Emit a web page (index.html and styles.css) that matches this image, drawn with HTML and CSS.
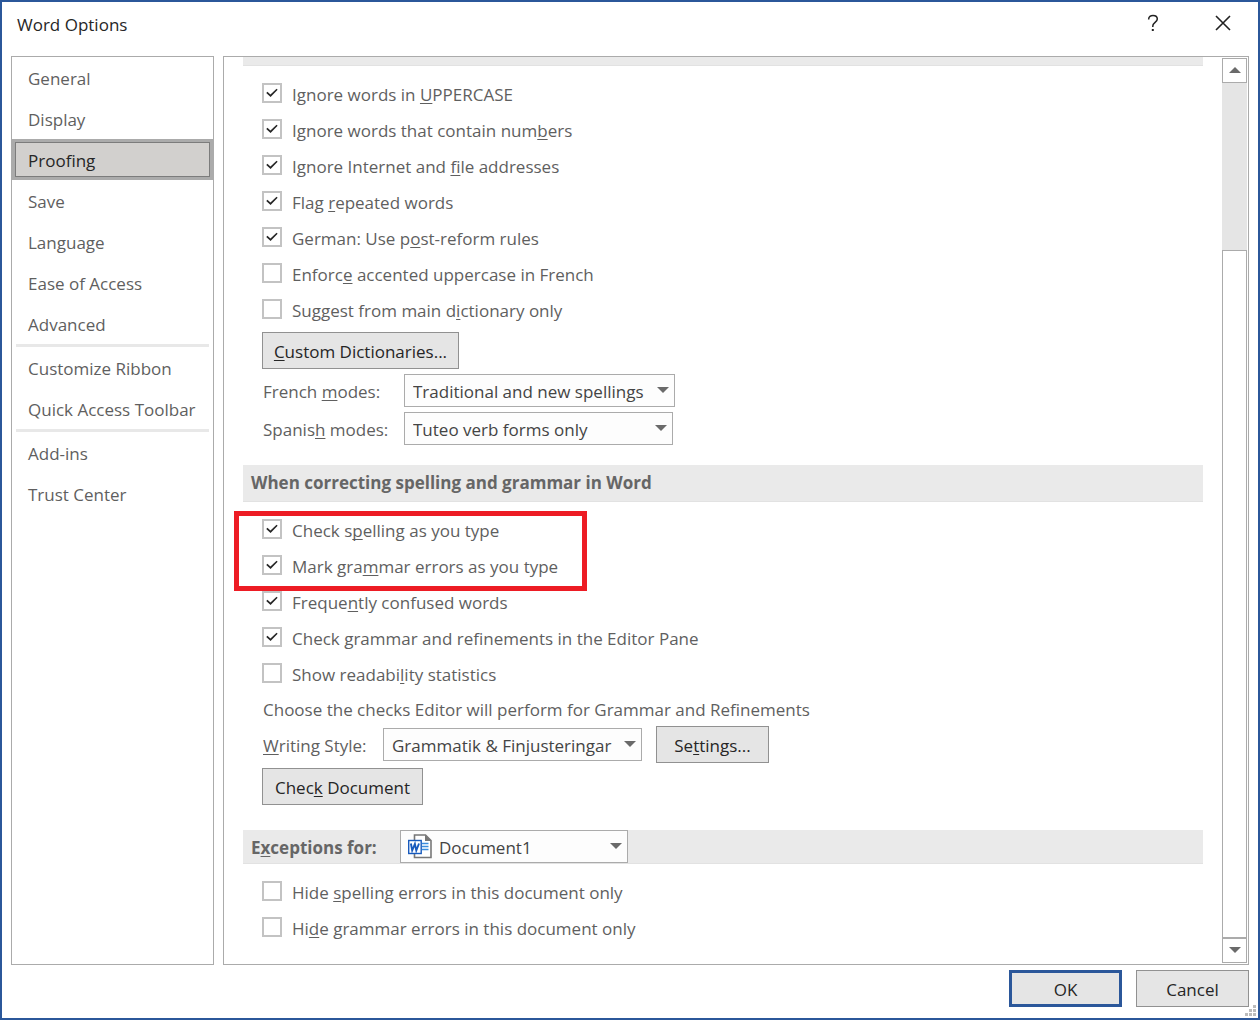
FILE: index.html
```html
<!DOCTYPE html>
<html lang="en">
<head>
<meta charset="utf-8">
<meta name="viewport" content="width=device-width, initial-scale=1">
<title>Word Options</title>
<link rel="stylesheet" href="styles.css">
</head>
<body>
<div class="dialog" role="dialog" aria-labelledby="dialog-title">
  <header class="titlebar">
    <h1 class="title" id="dialog-title">Word Options</h1>
    <button class="caption-btn" type="button" aria-label="Help">
      <svg width="16" height="18" viewBox="0 0 16 18" fill="none" stroke="#222" stroke-width="1.5"><path d="M3.700 5.600V5C3.700 2.700 5.600 1.500 8 1.500S12.300 2.800 12.300 5C12.300 8.200 7.800 8.600 7.800 12V13"/><path d="M7.800 15V17" stroke-width="2"/></svg>
    </button>
    <button class="caption-btn" type="button" aria-label="Close">
      <svg width="16" height="16" viewBox="0 0 16 16" fill="none" stroke="#222" stroke-width="1.6"><path d="M1 1L15 15M15 1L1 15"/></svg>
    </button>
  </header>

  <div class="main">
    <nav class="sidebar" aria-label="Categories">
      <a class="nav-item" href="#general">General</a>
      <a class="nav-item" href="#display">Display</a>
      <a class="nav-item selected" href="#proofing" aria-current="page">Proofing</a>
      <a class="nav-item" href="#save">Save</a>
      <a class="nav-item" href="#language">Language</a>
      <a class="nav-item" href="#ease">Ease of Access</a>
      <a class="nav-item" href="#advanced">Advanced</a>
      <hr class="nav-rule">
      <a class="nav-item" href="#ribbon">Customize Ribbon</a>
      <a class="nav-item" href="#toolbar">Quick Access Toolbar</a>
      <hr class="nav-rule">
      <a class="nav-item" href="#addins">Add-ins</a>
      <a class="nav-item" href="#trust">Trust Center</a>
    </nav>

    <div class="panel">
      <form class="options" id="proofing">
        <div class="section-edge"></div>
        <div class="group">
          <label class="check"><input type="checkbox" checked><span>Ignore words in <u>U</u>PPERCASE</span></label>
          <label class="check"><input type="checkbox" checked><span>Ignore words that contain num<u>b</u>ers</span></label>
          <label class="check"><input type="checkbox" checked><span>Ignore Internet and <u>f</u>ile addresses</span></label>
          <label class="check"><input type="checkbox" checked><span>Flag <u>r</u>epeated words</span></label>
          <label class="check"><input type="checkbox" checked><span>German: Use p<u>o</u>st-reform rules</span></label>
          <label class="check"><input type="checkbox"><span>Enforc<u>e</u> accented uppercase in French</span></label>
          <label class="check"><input type="checkbox"><span>Suggest from main d<u>i</u>ctionary only</span></label>
          <div class="stack">
            <button class="btn btn-dictionaries" type="button"><u>C</u>ustom Dictionaries...</button>
            <div class="field">
              <label class="field-label modes" for="french">French <u>m</u>odes:</label>
              <span class="combo combo-french"><select id="french"><option>Traditional and new spellings</option></select></span>
            </div>
            <div class="field">
              <label class="field-label modes" for="spanish">Spanis<u>h</u> modes:</label>
              <span class="combo combo-spanish"><select id="spanish"><option>Tuteo verb forms only</option></select></span>
            </div>
          </div>
        </div>

        <h2 class="section">When correcting spelling and grammar in Word</h2>
        <div class="group">
          <div class="highlight">
            <label class="check"><input type="checkbox" checked><span>Check s<u>p</u>elling as you type</span></label>
            <label class="check"><input type="checkbox" checked><span>Mark gra<u>m</u>mar errors as you type</span></label>
          </div>
          <label class="check"><input type="checkbox" checked><span>Freque<u>n</u>tly confused words</span></label>
          <label class="check"><input type="checkbox" checked><span>Check grammar and refinements in the Editor Pane</span></label>
          <label class="check"><input type="checkbox"><span>Show readabi<u>l</u>ity statistics</span></label>
          <p class="note">Choose the checks Editor will perform for Grammar and Refinements</p>
          <div class="field">
            <label class="field-label style" for="style"><u>W</u>riting Style:</label>
            <span class="combo combo-style"><select id="style"><option>Grammatik &amp; Finjusteringar</option></select></span>
            <button class="btn btn-std" type="button">Se<u>t</u>tings...</button>
          </div>
          <button class="btn btn-check" type="button">Chec<u>k</u> Document</button>
        </div>

        <div class="section section-field">
          <label class="exceptions" for="doc">E<u>x</u>ceptions for:</label>
          <span class="combo combo-doc">
            <svg class="doc-icon" width="24" height="25" viewBox="0 0 24 25" fill="none">
              <path d="M6.500 1H17.500L23 6.500V23.500H6.500Z" fill="#fff" stroke="#777" stroke-width="1.600"/>
              <path d="M17 1V7H23Z" fill="#777"/>
              <path d="M14 9.500H20.500M14 12.500H20.500M14 15.500H20.500" stroke="#3a8ddd" stroke-width="1.500"/>
              <rect x="0.700" y="6.500" width="12.500" height="13" fill="#fff" stroke="#185abd" stroke-width="1.400"/>
              <path d="M2.900 9.500L4.200 16.500L6.900 10L8.300 16.500L11 9.500" stroke="#185abd" stroke-width="1.900"/>
            </svg>
            <select id="doc"><option>Document1</option></select>
          </span>
        </div>
        <div class="group">
          <label class="check"><input type="checkbox"><span>Hide <u>s</u>pelling errors in this document only</span></label>
          <label class="check"><input type="checkbox"><span>Hi<u>d</u>e grammar errors in this document only</span></label>
        </div>
      </form>

      <div class="scrollbar">
        <button class="scroll-btn up" type="button" aria-label="Scroll up"></button>
        <div class="scroll-gap"></div>
        <div class="scroll-thumb"></div>
        <button class="scroll-btn down" type="button" aria-label="Scroll down"></button>
      </div>
    </div>
  </div>

  <footer class="footer">
    <button class="btn btn-std btn-default" type="button">OK</button>
    <button class="btn btn-std" type="button">Cancel</button>
  </footer>
  <svg class="grip" width="11" height="11" viewBox="0 0 11 11" fill="#bcbcbc" aria-hidden="true"><path d="M8 0h3v3h-3zM4 4h3v3h-3zM8 4h3v3h-3zM0 8h3v3h-3zM4 8h3v3h-3zM8 8h3v3h-3z"/></svg>
</div>
</body>
</html>
```
FILE: styles.css
```css
*, *::before, *::after { box-sizing: border-box; }

body {
  margin: 0;
  background: #fff;
  color: #5f5f5f;
  font: 17px/24px "Open Sans", "Noto Sans", sans-serif;
}

button, select, input { font: inherit; margin: 0; }

u {
  text-decoration-thickness: 1px;
  text-underline-offset: 2px;
  text-decoration-skip-ink: none;
}

.dialog {
  position: relative;
  display: flex;
  flex-direction: column;
  min-height: 100vh;
  border: 2px solid #2b579a;
}

/* Title bar */
.titlebar {
  display: flex;
  align-items: center;
  height: 54px;
  padding: 0 0 12px 15px;
}
.title {
  flex: 1;
  margin: 0;
  padding-top: 4px;
  color: #262626;
  font-size: 17px;
  font-weight: 400;
}
.caption-btn {
  display: grid;
  place-items: center;
  width: 70px;
  height: 40px;
  padding: 0;
  border: 0;
  background: none;
}

/* Two columns */
.main {
  flex: 1;
  display: grid;
  grid-template-columns: 203px 1fr;
  gap: 9px;
  padding: 0 9px;
}
.sidebar, .panel { border: 1px solid #ababab; }

.nav-item {
  display: flex;
  align-items: center;
  height: 41px;
  padding: 2px 16px 0;
  color: inherit;
  text-decoration: none;
  white-space: nowrap;
}
.nav-item.selected {
  padding: 2px 13px 0;
  border: 3px solid #ababab;
  background: #d2d0ce;
  color: #262626;
  outline: 1px solid #7c7c7c;
  outline-offset: -4px;
}
.nav-rule {
  height: 3px;
  margin: 0 4px;
  border: 0;
  background: #e8e8e8;
}

/* Options panel */
.panel { display: flex; padding: 0 1px 0 19px; }
.options { flex: 1; min-width: 0; }

.section-edge {
  height: 9px;
  background: #eaeaea;
  border-bottom: 1px solid #e2e2e2;
}
.group { padding: 9px 0 0 19px; }

.section {
  display: flex;
  align-items: center;
  height: 37px;
  margin: 20px 0 0;
  padding: 0 8px;
  border-bottom: 1px solid #e2e2e2;
  background: #eaeaea;
  color: #666;
  font-size: 17px;
  font-weight: 700;
}
.section-field { height: 34px; margin-top: 25px; }
.exceptions { width: 149px; padding-top: 2px; }

.check {
  display: flex;
  align-items: center;
  gap: 10px;
  width: max-content;
  height: 36px;
}
.check span { padding-top: 4px; }
.check input {
  appearance: none;
  display: grid;
  place-items: center;
  width: 20px;
  height: 20px;
  border: 2px solid #c3c3c3;
  background: #fff;
}
.check input:checked::before {
  content: "";
  width: 12px;
  height: 10px;
  background: #262626;
  clip-path: polygon(2% 50%, 12% 38%, 37% 66%, 88% 8%, 97% 18%, 38% 90%);
}

.highlight { position: relative; }
.highlight::after {
  content: "";
  position: absolute;
  top: 0;
  left: -28px;
  width: 353px;
  height: 80px;
  border: 5px solid #ed1c24;
  pointer-events: none;
}

.stack {
  display: flex;
  flex-direction: column;
  align-items: flex-start;
  gap: 5px;
  padding-top: 5px;
}
.field { display: flex; align-items: center; }
.field-label { padding: 2px 0 0 1px; }
.modes { width: 142px; }
.style { width: 121px; }
.note { margin: 0; padding: 7px 0 4px 1px; }

.btn {
  height: 37px;
  padding: 2px 0 0;
  border: 1px solid #919191;
  background: #e5e5e5;
  color: #262626;
}
.btn-std { width: 113px; }
.btn-dictionaries { width: 197px; }
.btn-check { width: 161px; margin-top: 5px; }
.btn-default { border: 3px solid #2b579a; }

.combo { position: relative; display: block; height: 33px; }
.combo::after {
  content: "";
  position: absolute;
  top: 13px;
  right: 6px;
  border: 6px solid transparent;
  border-top-color: #6a6a6a;
  border-bottom: 0;
  pointer-events: none;
}
.combo select {
  appearance: none;
  width: 100%;
  height: 33px;
  padding: 2px 8px 0;
  border: 1px solid #ababab;
  border-radius: 0;
  background: #fdfdfd;
  color: #444;
}
.combo-french { width: 271px; }
.combo-spanish { width: 269px; }
.combo-style { width: 259px; margin-right: 14px; }
.combo-doc { width: 228px; font-weight: 400; }
.combo-doc select { padding-left: 38px; }
.doc-icon { position: absolute; top: 4px; left: 8px; }

/* Scrollbar */
.scrollbar {
  display: flex;
  flex-direction: column;
  width: 25px;
  margin: 1px 0 1px 19px;
  background: #e5e5e5;
}
.scroll-btn {
  display: grid;
  place-items: center;
  height: 25px;
  padding: 0 0 1px;
  border: 1px solid #ababab;
  background: #fff;
}
.scroll-btn::before {
  content: "";
  border: 6px solid transparent;
}
.up::before { border-top: 0; border-bottom-color: #6a6a6a; }
.down::before { border-bottom: 0; border-top-color: #6a6a6a; }
.scroll-gap { flex: 167; }
.scroll-thumb {
  flex: 688;
  border: 1px solid #ababab;
  background: #fff;
}

/* Footer */
.footer {
  display: flex;
  justify-content: flex-end;
  gap: 14px;
  padding: 5px 9px 11px;
}
.grip { position: absolute; right: 2px; bottom: 2px; }
```
